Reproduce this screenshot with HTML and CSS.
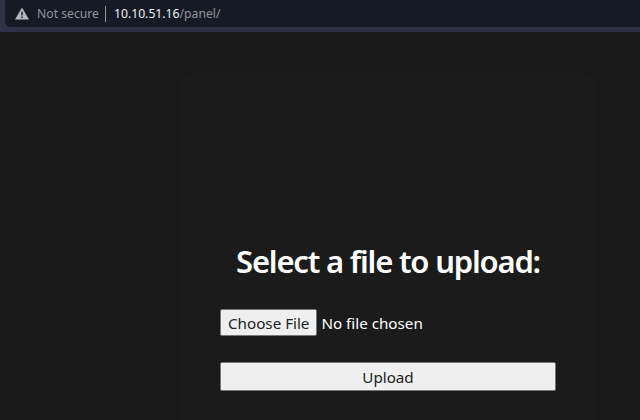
FILE: index.html
```html
<!DOCTYPE html>
<html lang="en">
<head>
  <meta charset="UTF-8">
  <title>Upload</title>
  <link rel="stylesheet" href="styles.css">
</head>
<body>
  <div class="toolbar">
    <div class="address-bar">
      <svg class="warn-icon" width="14" height="13" viewBox="0 0 14 13">
        <path fill="#b4b7bd" fill-rule="evenodd" d="M7 0.5 L14 12.5 L0 12.5 Z M6.3 4.5 V8.5 H7.7 V4.5 Z M6.3 9.6 V11 H7.7 V9.6 Z"/>
      </svg>
      <span class="not-secure">Not secure</span>
      <span class="divider"></span>
      <span class="url"><span class="host">10.10.51.16</span>/panel/</span>
    </div>
  </div>

  <div class="page">
    <div class="card">
      <h1>Select a file to upload:</h1>
      <form class="upload-form">
        <input type="file" class="file-input">
        <button type="button" class="upload-button">Upload</button>
      </form>
    </div>
  </div>
</body>
</html>
```

FILE: styles.css
```css
* {
  margin: 0;
  padding: 0;
  box-sizing: border-box;
}

html, body {
  height: 100%;
  overflow: hidden;
}

body {
  font-family: "Noto Sans", "Open Sans", sans-serif;
  background: #191919;
  color: #ffffff;
  display: flex;
  flex-direction: column;
}

.toolbar {
  height: 32px;
  background: #2e3244;
  padding-bottom: 5px;
}

.address-bar {
  height: 27px;
  margin-left: 5px;
  background: #161a24;
  border-bottom-left-radius: 6px;
  display: flex;
  align-items: center;
  padding-left: 10px;
  font-size: 12.2px;
}

.warn-icon {
  margin-right: 8px;
}

.not-secure {
  color: #8f939c;
}

.divider {
  width: 1px;
  height: 16px;
  background: #8f939c;
  margin: 0 8px 0 6px;
}

.url {
  color: #8f939c;
}

.host {
  color: #f1f2f4;
}

.page {
  flex: 1;
  display: flex;
  padding: 40px 42px 0 178px;
}

.card {
  flex: 1;
  background: #1b1b1b;
  border-radius: 20px 20px 0 0;
  padding: 167px 42px 0;
}

h1 {
  font-size: 31px;
  font-weight: 600;
  line-height: 44px;
  text-align: center;
  letter-spacing: -1.2px;
  margin-bottom: 26px;
}

.upload-form {
  display: flex;
  flex-direction: column;
  gap: 26px;
}

.file-input {
  font-family: inherit;
  font-size: 15.2px;
  color: #ffffff;
  height: 27px;
}

.file-input::file-selector-button {
  font-family: inherit;
  font-size: 15.2px;
  height: 27px;
  padding: 0 7px;
  margin-right: 4px;
  background: #efefef;
  color: #222222;
  border: 1px solid #767676;
  border-radius: 2px;
}

.upload-button {
  font-family: inherit;
  font-size: 15.2px;
  height: 29px;
  width: 336px;
  background: #efefef;
  color: #222222;
  border: 1px solid #767676;
  border-radius: 2px;
}
```
